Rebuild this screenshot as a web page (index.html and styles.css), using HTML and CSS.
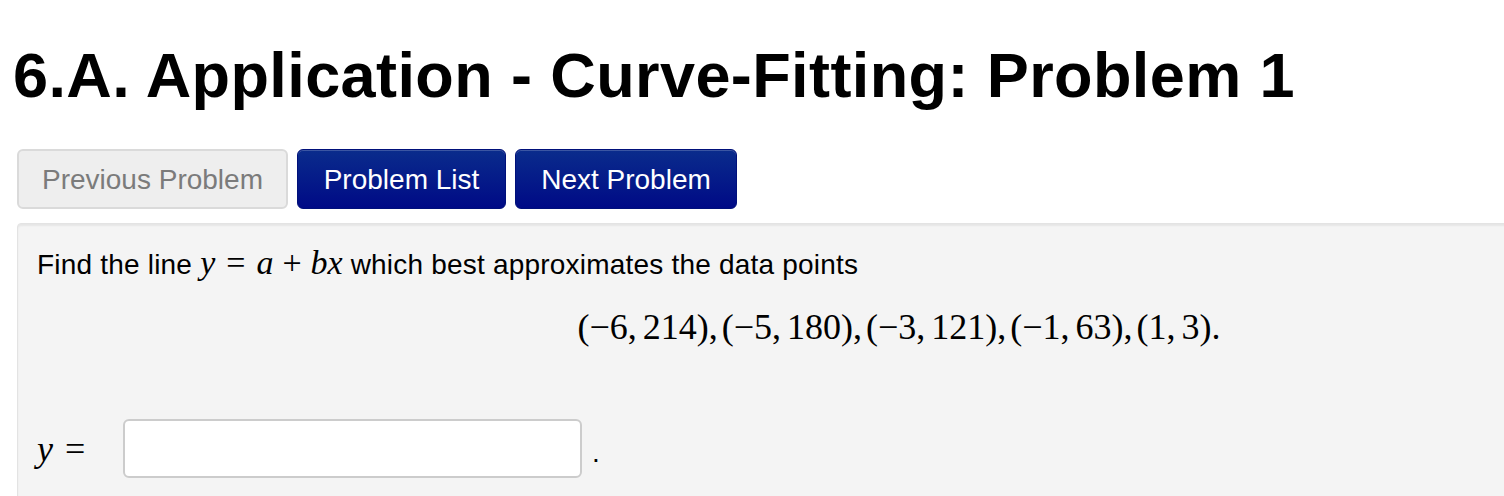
FILE: index.html
```html
<!DOCTYPE html>
<html lang="en">
<head>
<meta charset="utf-8">
<title>6.A. Application - Curve-Fitting: Problem 1</title>
<link rel="stylesheet" href="styles.css">
</head>
<body>
<main class="page">
  <h1 class="title">6.A. Application - Curve-Fitting: Problem 1</h1>
  <nav class="nav">
    <span class="btn btn-disabled">Previous Problem</span>
    <a class="btn btn-primary" href="#">Problem List</a>
    <a class="btn btn-primary" href="#">Next Problem</a>
  </nav>
  <section class="well">
    <p class="prompt">Find the line <span class="math"><i>y</i><span class="rel">=</span><i>a</i><span class="bin">+</span><i>b</i><i>x</i></span> which best approximates the data points</p>
    <div class="display">(−6,<span class="thin"></span>214),<span class="sp"></span>(−5,<span class="thin"></span>180),<span class="sp"></span>(−3,<span class="thin"></span>121),<span class="sp"></span>(−1,<span class="thin"></span>63),<span class="sp"></span>(1,<span class="thin"></span>3).</div>
    <div class="answer">
      <span class="math label"><i>y</i><span class="rel">=</span></span>
      <input class="field" type="text" aria-label="answer">
      <span class="dot">.</span>
    </div>
  </section>
</main>
</body>
</html>
```
FILE: styles.css
```css
html, body {
  margin: 0;
  padding: 0;
  background: #ffffff;
  overflow: hidden;
}
body {
  font-family: "Liberation Sans", Arial, Helvetica, sans-serif;
  color: #000;
}
.page {
  padding: 40px 0 0 17px;
}
.title {
  margin: 0 0 0 -4px;
  font-size: 63px;
  line-height: 70px;
  font-weight: bold;
  letter-spacing: 0.4px;
  white-space: nowrap;
}
.nav {
  display: flex;
  gap: 9px;
  margin-top: 39px;
}
.btn {
  box-sizing: border-box;
  height: 60px;
  display: flex;
  align-items: center;
  justify-content: center;
  border-radius: 6px;
  font-size: 28px;
  text-decoration: none;
  white-space: nowrap;
  padding-top: 2px;
}
.btn-disabled {
  width: 271px;
  background: #eeeeee;
  border: 2px solid #dadada;
  color: #7b7b7b;
}
.btn-primary {
  background: linear-gradient(#0a2c8c, #000a86);
  border: 1px solid #00107a;
  color: #ffffff;
  box-shadow: inset 0 1px 0 rgba(255,255,255,0.2);
}
.nav .btn-primary:nth-child(2) { width: 209px; }
.nav .btn-primary:nth-child(3) { width: 222px; }
.well {
  box-sizing: border-box;
  width: 1764px;
  min-height: 300px;
  margin-top: 14px;
  padding: 19px 19px 19px 19px;
  background: #f4f4f4;
  border: 1px solid #e3e3e3;
  border-radius: 4px;
  box-shadow: inset 0 2px 2px rgba(0,0,0,0.06);
}
.prompt {
  margin: 0;
  font-size: 28px;
  line-height: 40px;
  white-space: nowrap;
  letter-spacing: 0.2px;
}
.math {
  font-family: "Liberation Serif", "Times New Roman", serif;
  font-size: 34px;
  letter-spacing: 0;
}
.math i { font-style: italic; }
.rel { padding: 0 11px; }
.bin { padding: 0 9px; }
.display {
  margin-top: 22px;
  text-align: center;
  font-family: "Liberation Serif", "Times New Roman", serif;
  font-size: 36px;
  line-height: 40px;
  white-space: nowrap;
}
.thin { display: inline-block; width: 6px; }
.sp { display: inline-block; width: 4px; }
.answer {
  display: flex;
  align-items: center;
  margin-top: 72px;
}
.label {
  width: 86px;
  font-size: 36px;
}
.label .rel { padding: 0 0 0 12px; }
.field {
  box-sizing: border-box;
  width: 459px;
  height: 59px;
  margin: 0;
  border: 2px solid #cccccc;
  border-radius: 6px;
  background: #ffffff;
  font-size: 24px;
}
.dot {
  font-size: 28px;
  margin-left: 10px;
  margin-top: 8px;
}
```
